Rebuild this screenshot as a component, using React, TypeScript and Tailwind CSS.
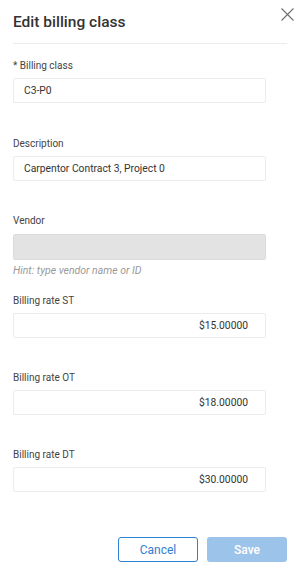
type Field = {
  label: string
  value: string
  align?: 'left' | 'right'
}

const topFields: Field[] = [
  { label: '* Billing class', value: 'C3-P0' },
  { label: 'Description', value: 'Carpentor Contract 3, Project 0' },
]

const rateFields: Field[] = [
  { label: 'Billing rate ST', value: '$15.00000', align: 'right' },
  { label: 'Billing rate OT', value: '$18.00000', align: 'right' },
  { label: 'Billing rate DT', value: '$30.00000', align: 'right' },
]

function FieldLabel({ children }: { children: React.ReactNode }) {
  return <div className="h-[14px] text-[10px] leading-[14px] text-[#444]">{children}</div>
}

function TextField({ field }: { field: Field }) {
  return (
    <div className="flex flex-col">
      <FieldLabel>{field.label}</FieldLabel>
      <div
        className={
          'mt-[5px] flex h-[25px] w-[253px] items-center rounded-[2px] border border-[#ececec] bg-white text-[10.3px] text-[#333] ' +
          (field.align === 'right' ? 'justify-end pr-[17px]' : 'pl-[10px]')
        }
      >
        {field.value}
      </div>
    </div>
  )
}

export default function App() {
  return (
    <div
      className="h-[572px] w-[300px] bg-white px-[13px]"
      style={{ fontFamily: 'Roboto, "Liberation Sans", sans-serif' }}
    >
      {/* Header */}
      <div className="flex h-[44px] items-start justify-between border-b border-[#ebebeb]">
        <h2 className="mt-[12px] text-[15.5px] font-medium leading-[20px] text-[#333]">
          Edit billing class
        </h2>
        <button type="button" className="mt-[8px] -mr-[7px] text-[#6f6f6f]">
          <svg width="13" height="13" viewBox="0 0 13 13" fill="none" stroke="currentColor" strokeWidth="1.1">
            <path d="M0.5 0.5 L12.5 12.5 M12.5 0.5 L0.5 12.5" />
          </svg>
        </button>
      </div>

      <div className="mt-[15px] flex flex-col gap-[34px]">
        {topFields.map((f) => (
          <TextField key={f.label} field={f} />
        ))}
      </div>

      {/* Vendor (disabled lookup) */}
      <div className="mt-[33px] flex flex-col">
        <FieldLabel>Vendor</FieldLabel>
        <div className="mt-[6px] h-[26px] w-[253px] rounded-[2px] border border-[#dcdcdc] bg-[#e3e3e3]" />
        <div className="mt-[4px] h-[14px] text-[10.5px] italic leading-[14px] text-[#999]">
          Hint: type vendor name or ID
        </div>
      </div>

      <div className="mt-[16px] flex flex-col gap-[33px]">
        {rateFields.map((f) => (
          <TextField key={f.label} field={f} />
        ))}
      </div>

      {/* Footer */}
      <div className="mt-[45px] flex justify-end gap-[9px]">
        <button
          type="button"
          className="h-[25px] w-[80px] rounded-[3px] border border-[#2f80d1] bg-white text-[12px] text-[#2f80d1]"
        >
          Cancel
        </button>
        <button
          type="button"
          disabled
          className="h-[25px] w-[80px] rounded-[3px] bg-[#9cc3e9] text-[12px] font-medium text-white"
        >
          Save
        </button>
      </div>
    </div>
  )
}
